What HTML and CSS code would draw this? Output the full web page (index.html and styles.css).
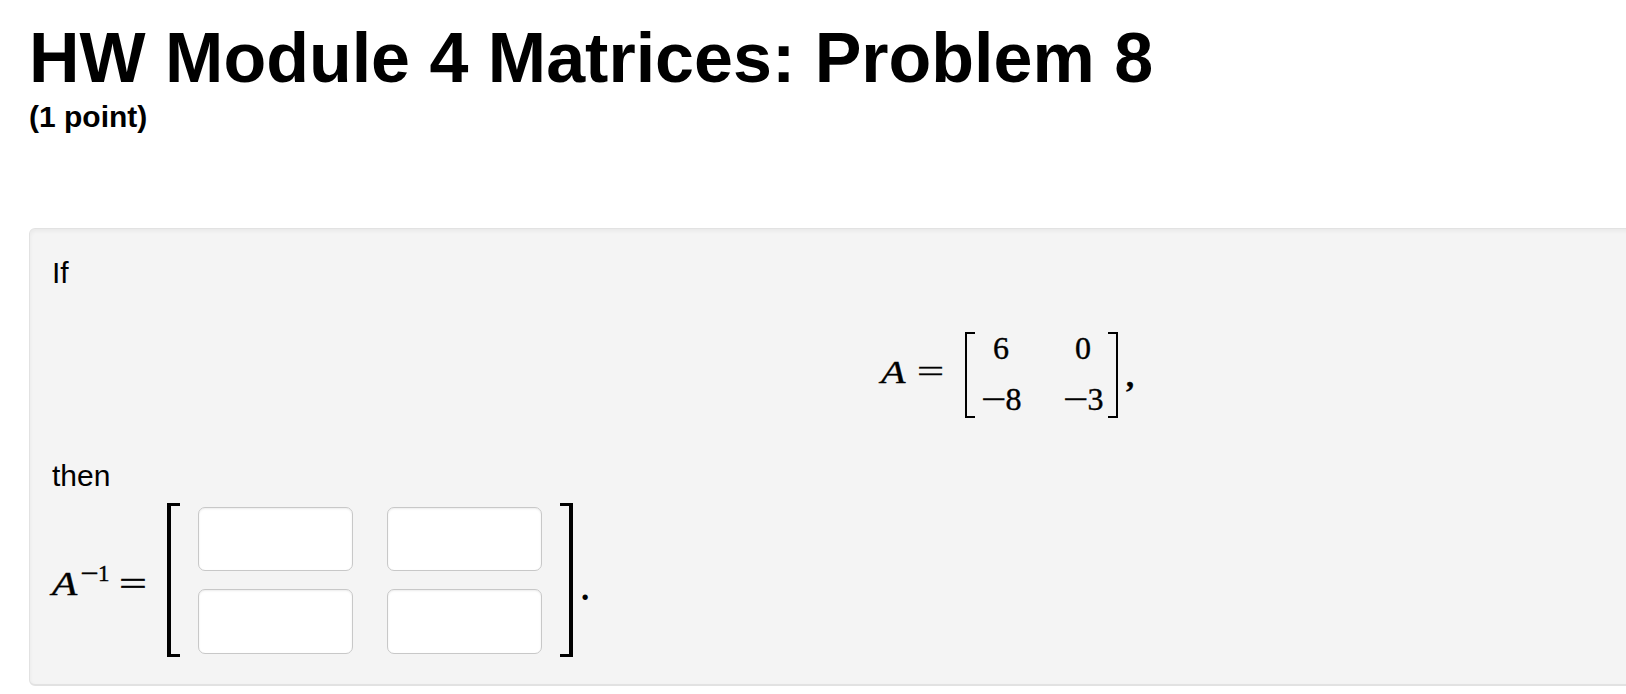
FILE: index.html
```html
<!DOCTYPE html>
<html lang="en">
<head>
<meta charset="utf-8">
<title>HW Module 4 Matrices: Problem 8</title>
<link rel="stylesheet" href="styles.css">
</head>
<body>
<div class="page">
  <h1 class="title">HW Module 4 Matrices: Problem 8</h1>
  <div class="points">(1 point)</div>

  <div class="problem">
    <p class="line">If</p>
    <div class="display">
      <span class="mi">A</span>
      <span class="eq">=</span>
      <span class="bm">
        <span class="br br-l"></span>
        <span class="cells">
          <span class="cell">6</span>
          <span class="cell">0</span>
          <span class="cell"><span class="minus">&minus;</span>8</span>
          <span class="cell"><span class="minus">&minus;</span>3</span>
        </span>
        <span class="br br-r"></span>
      </span>
      <span class="comma">,</span>
    </div>
    <p class="line">then</p>
    <div class="answer-row">
      <span class="lhs"><span class="mi">A</span><span class="sup"><span class="minus minus-s">&minus;</span>1</span><span class="eq eq2">=</span></span>
      <span class="bm bm2">
        <span class="br br2 br-l"></span>
        <span class="inputs">
          <input class="ans" type="text" aria-label="entry 1,1">
          <input class="ans" type="text" aria-label="entry 1,2">
          <input class="ans" type="text" aria-label="entry 2,1">
          <input class="ans" type="text" aria-label="entry 2,2">
        </span>
        <span class="br br2 br-r"></span>
      </span>
      <span class="period">.</span>
    </div>
  </div>
</div>
</body>
</html>
```

FILE: styles.css
```css
html, body {
  margin: 0;
  padding: 0;
  background: #ffffff;
  color: #000000;
}

.page {
  padding-left: 29px;
  font-family: "Liberation Sans", Arial, Helvetica, sans-serif;
}

.title {
  margin: 23px 0 0 0;
  font-size: 70px;
  line-height: 70px;
  font-weight: bold;
  white-space: nowrap;
}

.points {
  margin-top: 7px;
  font-size: 30px;
  line-height: 34px;
  font-weight: bold;
}

.problem {
  margin-top: 94px;
  width: 1957px;
  box-sizing: border-box;
  background: #f4f4f4;
  border: 1px solid #e2e2e2;
  border-bottom-width: 2px;
  border-radius: 6px;
  box-shadow: inset 0 2px 4px rgba(0, 0, 0, 0.05);
  padding: 23px 22px 27px;
  font-size: 30px;
}

.line {
  margin: 0;
  line-height: 42px;
}

.display {
  height: 161px;
  display: flex;
  align-items: center;
  justify-content: center;
  font-family: "Liberation Serif", "Times New Roman", serif;
  font-size: 32px;
  -webkit-text-stroke: 0.4px #000;
}

.mi {
  font-family: "Liberation Serif", "Times New Roman", serif;
  font-style: italic;
  display: inline-block;
  width: 27px;
  transform: scaleX(1.25);
  transform-origin: left center;
}

.display .mi {
  margin-top: -4px;
}

.eq {
  display: inline-block;
  width: 27px;
  text-align: center;
  transform: scaleX(1.5);
}

.display .eq {
  margin: -6px 21px 0 9px;
}

.bm {
  display: inline-flex;
  align-items: stretch;
}

.br {
  width: 8px;
  height: 82px;
  border: 2px solid #000;
}

.br-l {
  border-right: none;
  margin-right: -8px;
}

.br-r {
  border-left: none;
  margin-left: -8px;
}

.cells {
  display: grid;
  grid-template-columns: 46px 46px;
  grid-template-rows: 32px 32px;
  column-gap: 36px;
  row-gap: 19px;
  padding: 0 10px 3px 11px;
  line-height: 32px;
}

.cell {
  text-align: center;
  white-space: nowrap;
}

.minus {
  display: inline-block;
  width: 25px;
  text-align: center;
  transform: scaleX(1.4);
}

.comma {
  margin: 4px 0 0 8px;
  font-weight: bold;
}

.answer-row {
  display: flex;
  align-items: center;
  margin-top: 6px;
}

.lhs {
  font-family: "Liberation Serif", "Times New Roman", serif;
  font-size: 33px;
  line-height: 40px;
  margin-top: -2px;
  white-space: nowrap;
  -webkit-text-stroke: 0.4px #000;
}

.sup {
  display: inline-block;
  margin-left: 2px;
  font-size: 23px;
  vertical-align: 14px;
  width: 30px;
}

.minus-s {
  width: 17px;
}

.eq2 {
  margin: 0 21px 0 9px;
  width: 26px;
}

.br2 {
  width: 9px;
  height: 148px;
  border-width: 3px;
  border-left-width: 4px;
}

.br2.br-r {
  border-left: none;
  border-right-width: 4px;
}

.bm2 .br-l {
  margin-right: -9px;
}

.bm2 .br-r {
  margin-left: -9px;
}

.inputs {
  display: grid;
  grid-template-columns: 155px 155px;
  grid-template-rows: 64px 65px;
  column-gap: 34px;
  row-gap: 18px;
  padding: 4px 27px 3px 27px;
}

.ans {
  box-sizing: border-box;
  width: 155px;
  height: 100%;
  margin: 0;
  background: #ffffff;
  border: 1px solid #c8c8c8;
  border-radius: 7px;
  box-shadow: inset 0 1px 2px rgba(0, 0, 0, 0.08);
  font-size: 26px;
  padding: 4px 10px;
}

.period {
  font-family: "Liberation Serif", "Times New Roman", serif;
  font-size: 33px;
  margin: 18px 0 0 8px;
  font-weight: bold;
}
```
